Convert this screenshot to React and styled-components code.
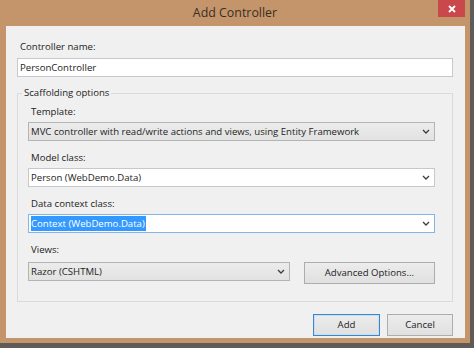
import React from "react";
import styled, { createGlobalStyle } from "styled-components";

const GlobalStyle = createGlobalStyle`
  html, body {
    margin: 0;
    padding: 0;
    width: 474px;
    height: 348px;
    overflow: hidden;
    background: #5f5b58;
  }
  body {
    font-family: "Open Sans", "Noto Sans", sans-serif;
    font-size: 9.6px;
    color: #232323;
  }
`;

const Window = styled.div`
  width: 470px;
  height: 343px;
  background: #c4956b;
  display: flex;
  flex-direction: column;
  position: relative;
`;

const TitleBar = styled.div`
  height: 26px;
  display: flex;
  align-items: center;
  justify-content: center;
  font-size: 12.4px;
  color: #3b2e24;
  padding-bottom: 1px;
  box-sizing: border-box;
`;

const CloseButton = styled.div`
  position: absolute;
  top: 0;
  right: 5px;
  width: 27px;
  height: 17px;
  background: #c9484b;
  display: flex;
  align-items: center;
  justify-content: center;
`;

const Body = styled.div`
  flex: 1;
  margin: 0 5px 5px 6px;
  background: #f0f0f0;
  padding: 14px 12px 2px 11px;
  display: flex;
  flex-direction: column;
  box-sizing: border-box;
`;

const Label = styled.div`
  height: 14px;
  line-height: 14px;
  padding-left: 3px;
  margin-bottom: ${(p) => p.$gap || 3}px;
`;

const TextBox = styled.div`
  height: 19px;
  box-sizing: border-box;
  border: 1px solid #c6c8cc;
  background: #fff;
  display: flex;
  align-items: center;
  padding-left: 2px;
`;

const Group = styled.fieldset`
  margin: 9px 0 0 0;
  border: 1px solid #dadada;
  padding: 5px 17px 17px 10px;
  display: flex;
  flex-direction: column;
  gap: 10px;
  min-width: 0;
`;

const Legend = styled.legend`
  padding: 0 2px;
  margin-left: -6px;
  height: 14px;
  line-height: 14px;
`;

const Field = styled.div`
  display: flex;
  flex-direction: column;
`;

const Combo = styled.div`
  height: 19px;
  box-sizing: border-box;
  border: 1px solid ${(p) => (p.$focused ? "#84b5e6" : p.$list ? "#b4b4b4" : "#c6c8cc")};
  background: ${(p) => (p.$list ? "linear-gradient(#ececec, #e2e2e2)" : "#fff")};
  display: flex;
  align-items: center;
  padding: 0 4px 0 2px;
  width: ${(p) => p.$width || "auto"};
`;

const ComboText = styled.span`
  flex: 1;
  white-space: nowrap;
`;

const Selected = styled.span`
  background: #3399ff;
  color: #fff;
  padding: 1px 1px 1px 0;
`;

const Row = styled.div`
  display: flex;
  align-items: flex-start;
  gap: 14px;
`;

const Button = styled.div`
  height: 22px;
  box-sizing: border-box;
  width: ${(p) => p.$width}px;
  border: 1px solid ${(p) => (p.$default ? "#3e84c8" : "#adadad")};
  box-shadow: ${(p) => (p.$default ? "inset 0 0 0 1px #c8def4" : "none")};
  background: linear-gradient(#ececec, #e0e0e0);
  display: flex;
  align-items: center;
  justify-content: center;
  padding-bottom: 1px;
`;

const Footer = styled.div`
  margin-top: 12px;
  display: flex;
  justify-content: flex-end;
  gap: 7px;
`;

const Chevron = () => (
  <svg width="8" height="5" viewBox="0 0 8 5">
    <path d="M1 1 L4 4 L7 1" fill="none" stroke="#3c3c3c" strokeWidth="1.3" />
  </svg>
);

const CloseIcon = () => (
  <svg width="8" height="8" viewBox="0 0 8 8">
    <path d="M1 1 L7 7 M7 1 L1 7" stroke="#fff" strokeWidth="1.8" />
  </svg>
);

const DropDown = ({ value, list, focused, width, selected }) => (
  <Combo $list={list} $focused={focused} $width={width}>
    <ComboText>{selected ? <Selected>{value}</Selected> : value}</ComboText>
    <Chevron />
  </Combo>
);

export default function App() {
  return (
    <>
      <GlobalStyle />
      <Window>
        <TitleBar>Add Controller</TitleBar>
        <CloseButton>
          <CloseIcon />
        </CloseButton>
        <Body>
          <Label $gap={4}>Controller name:</Label>
          <TextBox>PersonController</TextBox>
          <Group>
            <Legend>Scaffolding options</Legend>
            <Field>
              <Label>Template:</Label>
              <DropDown list value="MVC controller with read/write actions and views, using Entity Framework" />
            </Field>
            <Field>
              <Label>Model class:</Label>
              <DropDown value="Person (WebDemo.Data)" />
            </Field>
            <Field>
              <Label>Data context class:</Label>
              <DropDown focused selected value="Context (WebDemo.Data)" />
            </Field>
            <Field>
              <Label $gap={5}>Views:</Label>
              <Row>
                <DropDown list width="263px" value="Razor (CSHTML)" />
                <Button $width={132}>Advanced Options...</Button>
              </Row>
            </Field>
          </Group>
          <Footer>
            <Button $default $width={67}>Add</Button>
            <Button $width={66}>Cancel</Button>
          </Footer>
        </Body>
      </Window>
    </>
  );
}
